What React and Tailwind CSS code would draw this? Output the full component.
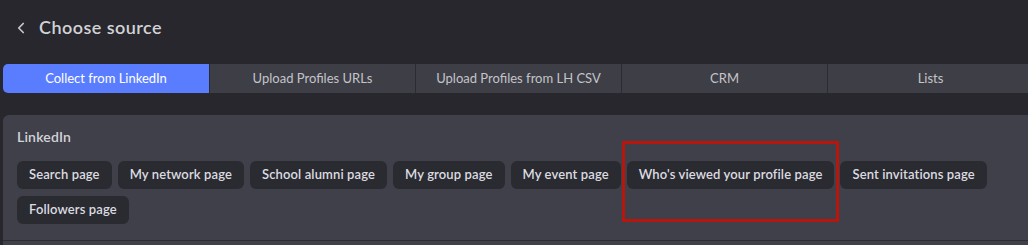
import React from 'react';
import { ChevronLeft } from 'lucide-react';

const tabs = ['Collect from LinkedIn', 'Upload Profiles URLs', 'Upload Profiles from LH CSV', 'CRM', 'Lists'];

const pages = [
  'Search page',
  'My network page',
  'School alumni page',
  'My group page',
  'My event page',
  "Who's viewed your profile page",
  'Sent invitations page',
  'Followers page',
];

export default function App() {
  return (
    <main
      className="w-[1028px] h-[245px] overflow-hidden bg-[#27272d] text-[#d6d6da]"
      style={{ fontFamily: 'Lato, "Noto Sans", sans-serif' }}
    >
      <header className="flex items-center h-[56px] pl-[12px] pb-[1px]">
        <ChevronLeft className="w-[18px] h-[18px] text-[#c8c8cc]" strokeWidth={2.25} />
        <span className="ml-[9px] text-[18px] font-semibold text-[#d2d2d6] tracking-[0.45px]">Choose source</span>
      </header>

      <div className="flex ml-[3px] mt-[8px] h-[29px] w-[1040px]">
        {tabs.map((tab, i) => (
          <div
            key={tab}
            className={
              i === 0
                ? 'w-[206px] shrink-0 flex items-center justify-center bg-[#5a7dff] text-white text-[13px] rounded-l-[5px]'
                : 'w-[206px] shrink-0 flex items-center justify-center bg-[#3e3e47] text-[#c4c4c9] text-[13px] border-l border-[#2b2b31]'
            }
          >
            {tab}
          </div>
        ))}
      </div>

      <section className="relative ml-[3px] mt-[22px] w-[1040px] bg-[#40404b] rounded-tl-[6px]">
        <div className="pl-[14px] pt-[12px] pb-[16px]">
          <h2 className="text-[14px] leading-[20px] font-semibold text-[#d4d4d8] tracking-[0.2px]">LinkedIn</h2>
          <div className="mt-[14px] flex flex-wrap gap-x-[6px] gap-y-[7px] w-[990px]">
            {pages.map((p) => (
              <button
                key={p}
                className="h-[28px] px-[12px] rounded-[6px] bg-[#2a2a31] text-[13px] font-semibold text-[#dcdce0] tracking-[0.12px]"
              >
                {p}
              </button>
            ))}
          </div>
        </div>
        <div className="border-t border-[#2c2c33] h-[10px]" />
        <div className="absolute left-[619px] top-[26px] w-[217px] h-[81px] border-[3px] border-[#b8160c]" />
      </section>
    </main>
  );
}
